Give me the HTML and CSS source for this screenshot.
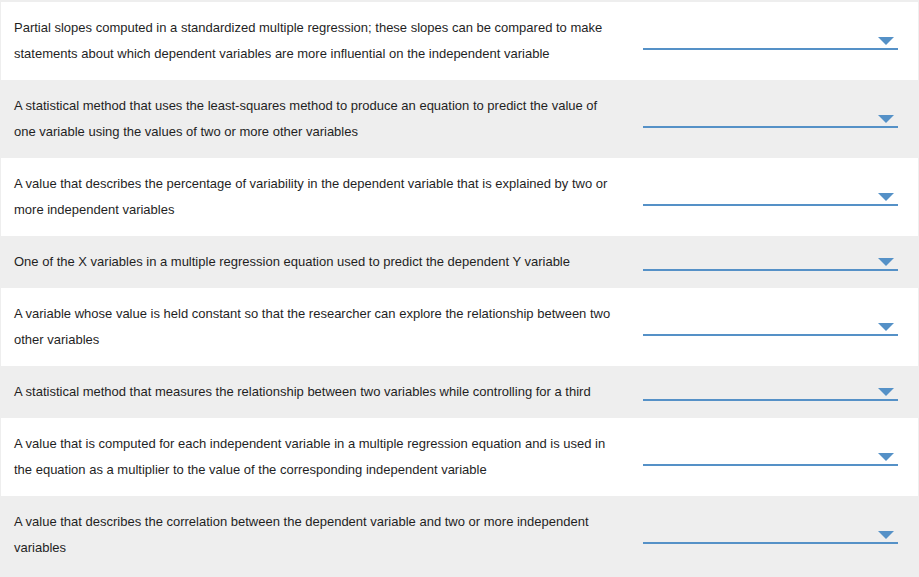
FILE: index.html
```html
<!DOCTYPE html>
<html>
<head>
<meta charset="utf-8">
<link rel="stylesheet" href="styles.css">
</head>
<body>
<div class="list">
  <div class="row white">
    <div class="q">Partial slopes computed in a standardized multiple regression; these slopes can be compared to make statements about which dependent variables are more influential on the independent variable</div>
    <div class="sel"><span class="arrow"></span></div>
  </div>
  <div class="row">
    <div class="q">A statistical method that uses the least-squares method to produce an equation to predict the value of one variable using the values of two or more other variables</div>
    <div class="sel"><span class="arrow"></span></div>
  </div>
  <div class="row white">
    <div class="q">A value that describes the percentage of variability in the dependent variable that is explained by two or more independent variables</div>
    <div class="sel"><span class="arrow"></span></div>
  </div>
  <div class="row">
    <div class="q">One of the X variables in a multiple regression equation used to predict the dependent Y variable</div>
    <div class="sel"><span class="arrow"></span></div>
  </div>
  <div class="row white">
    <div class="q">A variable whose value is held constant so that the researcher can explore the relationship between two other variables</div>
    <div class="sel"><span class="arrow"></span></div>
  </div>
  <div class="row">
    <div class="q">A statistical method that measures the relationship between two variables while controlling for a third</div>
    <div class="sel"><span class="arrow"></span></div>
  </div>
  <div class="row white">
    <div class="q">A value that is computed for each independent variable in a multiple regression equation and is used in the equation as a multiplier to the value of the corresponding independent variable</div>
    <div class="sel"><span class="arrow"></span></div>
  </div>
  <div class="row">
    <div class="q">A value that describes the correlation between the dependent variable and two or more independent variables</div>
    <div class="sel"><span class="arrow"></span></div>
  </div>
</div>
</body>
</html>
```
FILE: styles.css
```css
html, body {
  margin: 0;
  padding: 0;
  background: #eeeeee;
}
body {
  font-family: "Liberation Sans", Arial, sans-serif;
  font-size: 13px;
  color: #1f1f1f;
}
.list {
  padding-top: 2px;
  display: flex;
  flex-direction: column;
}
.row {
  display: flex;
  align-items: center;
  margin: 0 1px;
  padding: 13px 19px 13px 13px;
  background: #eeeeee;
}
.row.white {
  background: #ffffff;
}
.q {
  flex: 0 0 602px;
  line-height: 26px;
}
.sel {
  margin-left: 27px;
  flex: 0 0 255px;
  height: 16px;
  border-bottom: 2px solid #5591c7;
  display: flex;
  justify-content: flex-end;
  align-items: flex-end;
  padding-bottom: 3px;
  box-sizing: content-box;
  margin-top: -3px;
}
.arrow {
  width: 0;
  height: 0;
  border-left: 8px solid transparent;
  border-right: 8px solid transparent;
  border-top: 8px solid #5591c7;
  margin-right: 4px;
}
```
